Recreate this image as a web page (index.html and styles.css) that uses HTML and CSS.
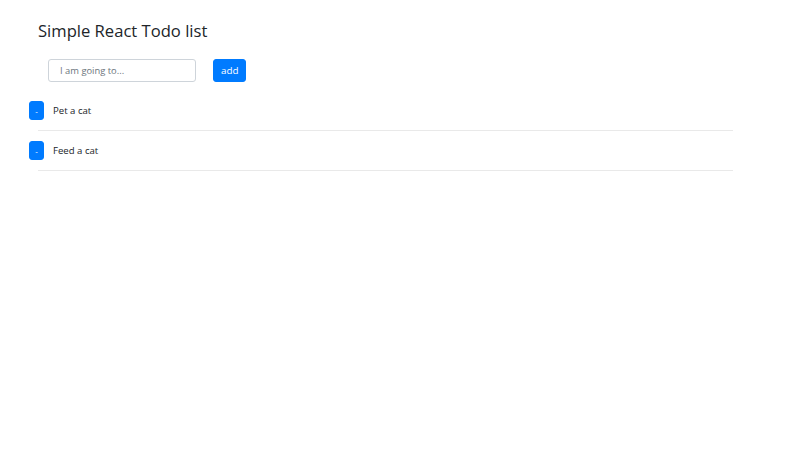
FILE: index.html
```html
<!DOCTYPE html>
<html lang="en">
<head>
<meta charset="utf-8">
<title>Simple React Todo list</title>
<link rel="stylesheet" href="styles.css">
</head>
<body>
  <div class="app">
    <h1 class="title">Simple React Todo list</h1>
    <form class="add-form" onsubmit="return false">
      <input class="field" type="text" placeholder="I am going to...">
      <button class="btn" type="submit">add</button>
    </form>
    <ul class="todos">
      <li class="todo">
        <button class="btn btn-remove" type="button">-</button>
        <span class="todo-text">Pet a cat</span>
      </li>
      <li class="todo">
        <button class="btn btn-remove" type="button">-</button>
        <span class="todo-text">Feed a cat</span>
      </li>
    </ul>
  </div>
</body>
</html>
```
FILE: styles.css
```css
* {
  box-sizing: border-box;
}

html, body {
  margin: 0;
  background: #fff;
}

body {
  font-family: "Open Sans", "Noto Sans", "Liberation Sans", sans-serif;
  color: #212529;
}

.app {
  width: 733px;
  padding: 18px 0 0 38px;
}

.title {
  margin: 0 0 15px;
  font-size: 16.6px;
  font-weight: 400;
  line-height: 26px;
}

.add-form {
  display: flex;
  align-items: center;
  gap: 17px;
  margin: 0 0 9px 10px;
}

.field {
  width: 148px;
  height: 23px;
  padding: 0 11px;
  border: 1px solid #ced4da;
  border-radius: 3px;
  font: inherit;
  font-size: 9.4px;
  color: #495057;
}

.field::placeholder {
  color: #6c757d;
}

.btn {
  height: 23px;
  padding: 0 7px;
  border: 1px solid #007bff;
  border-radius: 3px;
  background: #007bff;
  color: #fff;
  font: inherit;
  font-size: 9.8px;
  cursor: pointer;
}

.todos {
  list-style: none;
  margin: 0;
  padding: 0;
}

.todo {
  display: flex;
  align-items: center;
  padding: 10px 0;
  border-bottom: 1px solid #e9e9e9;
}

.btn-remove {
  width: 15px;
  height: 19px;
  padding: 0;
  margin-left: -9px;
  font-size: 8px;
  line-height: 1;
}

.todo-text {
  margin-left: 9px;
  font-size: 9.6px;
}
```
